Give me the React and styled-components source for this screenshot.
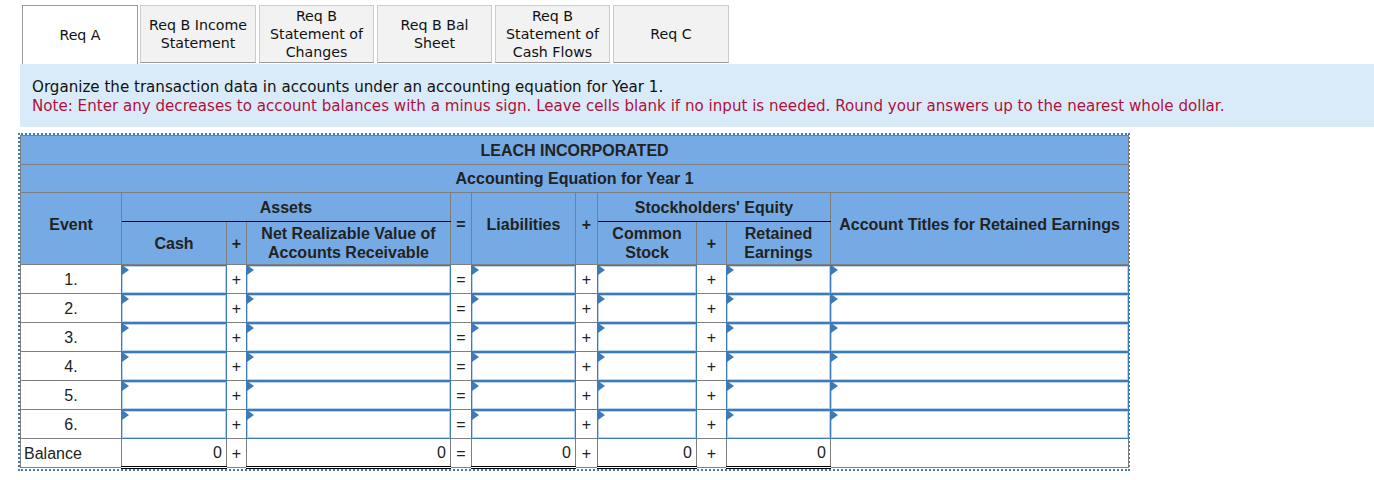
import React from "react";
import styled, { createGlobalStyle } from "styled-components";

const Global = createGlobalStyle`
  html, body { margin: 0; padding: 0; background: #fff; overflow: hidden; }
  body { font-family: "DejaVu Sans", Verdana, sans-serif; }
`;
const Page = styled.div`
  width: 1374px;
  height: 480px;
  overflow: hidden;
  padding-top: 5px;
  box-sizing: border-box;
`;
const TabBar = styled.div`
  display: flex;
  gap: 2px;
  padding-left: 22px;
  margin-left: 20px;
  margin-left: 0;
  height: 59px;
`;
const Tab = styled.div`
  width: ${(p) => p.$w}px;
  height: ${(p) => (p.$active ? 59 : 58)}px;
  margin-right: ${(p) => p.$mr || 0}px;
  box-sizing: border-box;
  display: flex;
  align-items: center;
  justify-content: center;
  text-align: center;
  font-size: 14.2px;
  line-height: 18px;
  color: #111;
  background: ${(p) => (p.$active ? "#fff" : "#f2f2f2")};
  border: 1px solid ${(p) => (p.$active ? "#999" : "#ccc")};
  border-bottom: ${(p) => (p.$active ? "none" : "1px solid #999")};
`;
const Info = styled.div`
  margin-left: 20px;
  height: 63px;
  box-sizing: border-box;
  padding: 14px 12px 0;
  background: #d9ebf9;
  font-size: 15.1px;
  line-height: 19px;
  color: #111;
`;
const Note = styled.div`
  color: #b0103c;
  white-space: nowrap;
`;
const Frame = styled.div`
  margin: 6px 0 0 18px;
  width: 1112px;
  box-sizing: border-box;
  border: 2px dotted #3f7ab8;
`;
const Table = styled.table`
  width: 1108px;
  table-layout: fixed;
  border-collapse: collapse;
  font-family: "Liberation Sans", Arial, sans-serif;
  font-size: 16px;
  color: #222;
`;
const Head = styled.th`
  background: #76aae4;
  border: 1px solid #7f7f7f;
  font-weight: bold;
  line-height: 19px;
  padding: 0;
  text-align: center;
  vertical-align: middle;
  ${(p) => p.$underline && "border-bottom: 1px solid #000;"}
  ${(p) => p.$edge && "padding: 0 2px; white-space: nowrap;"}
  ${(p) => p.$up && "padding-bottom: 8px;"}
`;
const Cell = styled.td`
  background: #fff;
  border: 1px solid #7f7f7f;
  padding: 0;
  text-align: center;
  line-height: 19px;
  vertical-align: middle;
  ${(p) => p.$left && "text-align: left; padding-left: 3px;"}
`;
const InputCell = styled.td`
  position: relative;
  padding: 0;
  border: 1px solid #7f7f7f;
  background: #fff;
  height: 28px;
`;
const Entry = styled.input`
  display: block;
  width: 100%;
  height: 27px;
  box-sizing: border-box;
  margin: 0;
  background: #fff;
  border: 1px solid #b9d2f0;
  outline: 1px solid #3f7ab8;
  outline-offset: 0;
  padding: 0;
`;
const Flag = styled.span`
  position: absolute;
  left: 0;
  top: 0;
  width: 0;
  height: 0;
  border-left: 7px solid #3f7ab8;
  border-top: 5px solid transparent;
  border-bottom: 5px solid transparent;
`;
const Total = styled.td`
  background: #fff;
  border: 1px solid #7f7f7f;
  border-top: 1px solid #000;
  border-bottom: 3px double #000;
  padding: 0 4px 0 0;
  text-align: right;
  line-height: 19px;
`;
const Row = styled.tr`
  height: ${(p) => p.$h}px;
`;
const Actions = styled.div`
  display: flex;
  margin: 11px 0 0 376px;
`;
const PrevButton = styled.div`
  width: 322px;
  height: 20px;
  background: #d9e6f5;
  border-radius: 3px;
`;
const NextButton = styled.div`
  width: 274px;
  height: 20px;
  margin-left: 25px;
  background: #3f7ab8;
  border-radius: 3px;
`;

const widths = [101, 105, 20, 204, 21, 104, 22, 99, 30, 104, 298];
const ops = ["+", "=", "+", "+"];
const Input = () => (
  <InputCell>
    <Flag />
    <Entry />
  </InputCell>
);

export default function App() {
  return (
    <Page>
      <Global />
      <TabBar>
        <Tab $active $w={116}>Req A</Tab>
        <Tab $w={116} $mr={1}>Req B Income Statement</Tab>
        <Tab $w={115} $mr={1}>Req B<br />Statement of Changes</Tab>
        <Tab $w={115} $mr={1}>Req B Bal<br />Sheet</Tab>
        <Tab $w={115} $mr={1}>Req B<br />Statement of Cash Flows</Tab>
        <Tab $w={116}>Req C</Tab>
      </TabBar>
      <Info>
        Organize the transaction data in accounts under an accounting equation for Year 1.
        <Note>Note: Enter any decreases to account balances with a minus sign. Leave cells blank if no input is needed. Round your answers up to the nearest whole dollar.</Note>
      </Info>
      <Frame>
        <Table>
          <colgroup>
            {widths.map((w, i) => <col key={i} style={{ width: w }} />)}
          </colgroup>
          <thead>
            <Row $h={29}><Head colSpan={11}>LEACH INCORPORATED</Head></Row>
            <Row $h={28}><Head colSpan={11}>Accounting Equation for Year 1</Head></Row>
            <Row $h={29}>
              <Head rowSpan={2} $up>Event</Head>
              <Head colSpan={3} $underline>Assets</Head>
              <Head rowSpan={2} $up>=</Head>
              <Head rowSpan={2} $up>Liabilities</Head>
              <Head rowSpan={2} $up>+</Head>
              <Head colSpan={3} $underline>Stockholders' Equity</Head>
              <Head rowSpan={2} $up $edge>Account Titles for Retained Earnings</Head>
            </Row>
            <Row $h={43}>
              <Head>Cash</Head>
              <Head>+</Head>
              <Head>Net Realizable Value of<br />Accounts Receivable</Head>
              <Head>Common<br />Stock</Head>
              <Head>+</Head>
              <Head>Retained<br />Earnings</Head>
            </Row>
          </thead>
          <tbody>
            {[1, 2, 3, 4, 5, 6].map((n) => (
              <Row key={n} $h={28.67}>
                <Cell>{n}.</Cell>
                <Input />
                <Cell>+</Cell>
                <Input />
                <Cell>=</Cell>
                <Input />
                <Cell>+</Cell>
                <Input />
                <Cell>+</Cell>
                <Input />
                <Input />
              </Row>
            ))}
            <Row $h={29}>
              <Cell $left>Balance</Cell>
              <Total>0</Total>
              <Cell>+</Cell>
              <Total>0</Total>
              <Cell>=</Cell>
              <Total>0</Total>
              <Cell>+</Cell>
              <Total>0</Total>
              <Cell>+</Cell>
              <Total>0</Total>
              <Cell />
            </Row>
          </tbody>
        </Table>
      </Frame>
      <Actions>
        <PrevButton />
        <NextButton />
      </Actions>
    </Page>
  );
}
